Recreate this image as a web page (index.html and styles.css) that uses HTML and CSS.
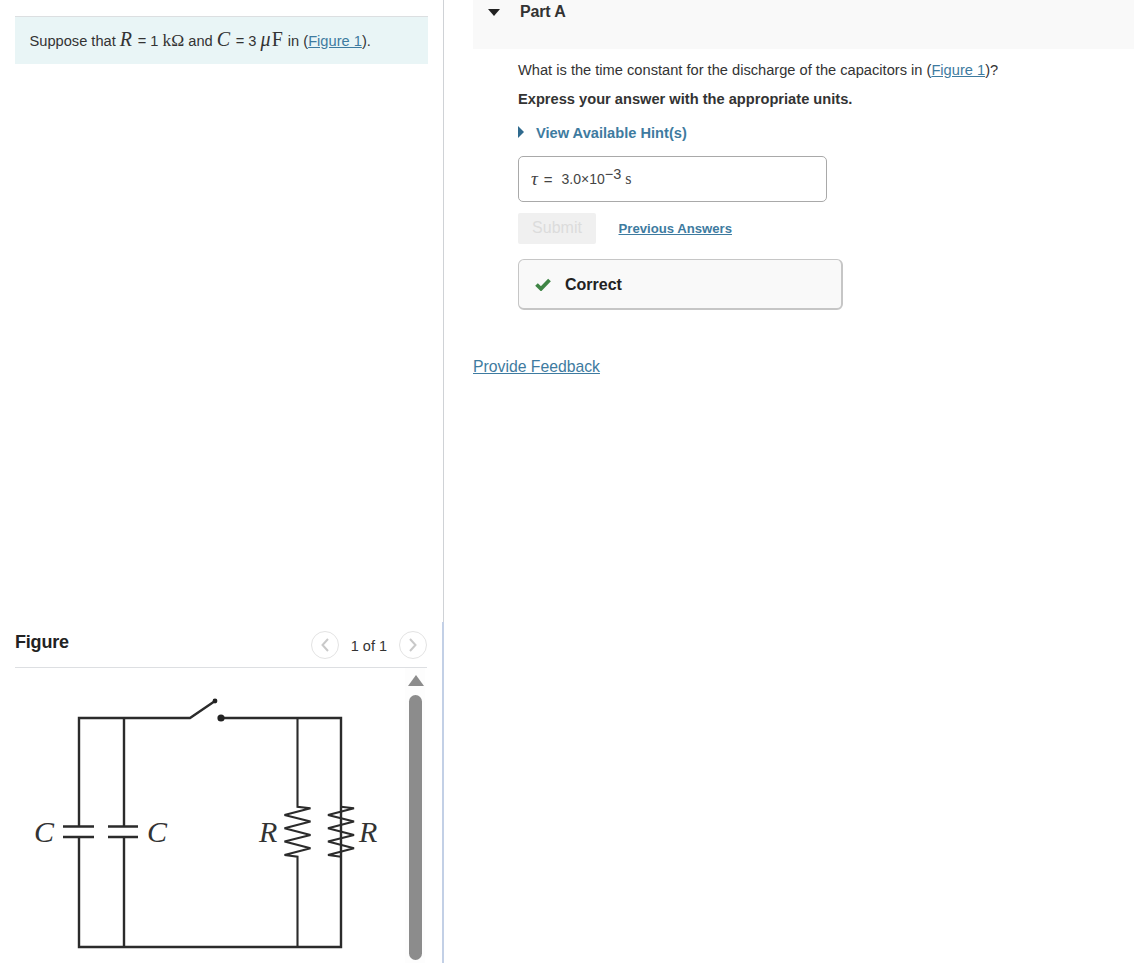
FILE: index.html
```html
<!DOCTYPE html>
<html lang="en">
<head>
<meta charset="utf-8">
<title>Part A</title>
<link rel="stylesheet" href="styles.css">
</head>
<body>
<div class="page">
  <aside class="left">
    <div class="intro">Suppose that <i class="m big wide">R</i> = 1 <span class="m roman">k&#937;</span> and <i class="m big wide">C</i> = 3 <span class="m micro"><i>&#956;</i>F</span> in (<a href="#">Figure 1</a>).</div>
    <section class="figure">
      <div class="fig-head">
        <h2>Figure</h2>
        <div class="pager">
          <span class="nav"><svg viewBox="0 0 10 14" width="10" height="14"><path d="M8 1 2.500 7 8 13" fill="none" stroke="#c9c9c9" stroke-width="2"/></svg></span>
          <span class="count">1 of 1</span>
          <span class="nav"><svg viewBox="0 0 10 14" width="10" height="14"><path d="M2 1 7.500 7 2 13" fill="none" stroke="#c9c9c9" stroke-width="2"/></svg></span>
        </div>
      </div>
      <div class="fig-body">
        <svg class="circuit" viewBox="0 0 390 295" width="390" height="295">
          <g fill="none" stroke="#2b2b2b" stroke-width="2.400">
            <path d="M64 158.500V50H175L200 33"/>
            <path d="M206 50H326V279H64V169"/>
            <path d="M109 50V158.500M109 169V279"/>
            <g stroke-width="2.100">
              <path d="M282.500 50V138.700L295.500 140.300 269.500 147 295.500 153.600 269.500 160.300 295.500 167 269.500 173.600 295.500 180.300 269.500 187 282.500 188.700V279"/>
              <path d="M326 138.700L339 140.300 313 147 339 153.600 313 160.300 339 167 313 173.600 339 180.300 313 187 326 188.700"/>
            </g>
            <path d="M48 158.500H79M48 169H79M93 158.500H123M93 169H123" stroke-width="2.600"/>
          </g>
          <circle cx="206" cy="50" r="3.600" fill="#222"/>
          <circle cx="200" cy="33" r="2.400" fill="#222"/>
          <g class="labels">
            <text x="19" y="174">C</text>
            <text x="132" y="174">C</text>
            <text x="244" y="174">R</text>
            <text x="344" y="174">R</text>
          </g>
        </svg>
        <div class="scroll">
          <span class="arrow"></span>
          <span class="thumb"></span>
        </div>
      </div>
    </section>
  </aside>
  <main class="right">
    <header class="part-head">
      <span class="caret"></span>
      <h1>Part A</h1>
    </header>
    <div class="part-body">
      <p class="q">What is the time constant for the discharge of the capacitors in (<a href="#">Figure 1</a>)?</p>
      <p class="ins">Express your answer with the appropriate units.</p>
      <div class="hint"><span class="hint-caret"></span><span>View Available Hint(s)</span></div>
      <div class="answer"><i class="serif tau">&#964;</i><span class="eq">=</span><span class="val">3.0&#215;10<sup>&#8722;3</sup></span><span class="serif unit">s</span></div>
      <div class="actions">
        <span class="submit">Submit</span>
        <a class="prev" href="#">Previous Answers</a>
      </div>
      <div class="correct">
        <svg viewBox="0 0 16 13" width="16" height="13"><path d="M1.500 6.500 6 10.800 14.500 2" fill="none" stroke="#3f8545" stroke-width="3.800"/></svg>
        <span>Correct</span>
      </div>
    </div>
    <a class="feedback" href="#">Provide Feedback</a>
  </main>
</div>
</body>
</html>
```
FILE: styles.css
```css
* { box-sizing: border-box; }
html, body { margin: 0; height: 963px; overflow: hidden; background: #fff; }
body { font-family: "Liberation Sans", Arial, sans-serif; font-size: 14.650px; color: #333; }
a { color: #3e7ba0; }
p, h1, h2 { margin: 0; }

.page { display: flex; height: 963px; }

.left {
  width: 444px;
  flex: none;
  padding: 16px 15px 0;
  border-right: 1px solid #cfd2d6;
  display: flex;
  flex-direction: column;
  justify-content: space-between;
}
.intro {
  width: 413px;
  height: 48px;
  padding-left: 14.500px;
  background: #e9f5f6;
  border-top: 1px solid #dcdfe1;
  white-space: pre;
  line-height: 44px;
}
.m { font-family: "Liberation Serif", serif; color: #333; }
.big { font-size: 20px; }
.wide { letter-spacing: 1.500px; }
.roman { font-size: 17.500px; }
.micro { font-size: 20px; letter-spacing: 1px; }

.figure { height: 332px; position: relative; }
.figure::after {
  content: "";
  position: absolute;
  right: -16px;
  top: -9px;
  bottom: 0;
  width: 2px;
  background: #c3d0e6;
}
.fig-head {
  width: 412px;
  height: 37px;
  display: flex;
  justify-content: space-between;
  align-items: flex-start;
  border-bottom: 1px solid #dddfe2;
}
h2 { font-size: 18px; line-height: 22px; font-weight: 700; color: #222; letter-spacing: -0.200px; }
.pager { display: flex; align-items: center; gap: 12px; }
.nav {
  width: 28px;
  height: 28px;
  border: 1px solid #e3e3e3;
  border-radius: 50%;
  display: flex;
  align-items: center;
  justify-content: center;
}
.count { font-size: 14.500px; color: #333; margin-top: 2px; }

.fig-body { position: relative; height: 295px; }
.circuit { display: block; }
.labels text { font-family: "Liberation Serif", serif; font-style: italic; font-size: 30px; fill: #333; stroke: none; }
.scroll {
  position: absolute;
  left: 390px;
  top: 0;
  bottom: 0;
  width: 20px;
  display: flex;
  flex-direction: column;
  align-items: center;
  background: #fdfdfd;
}
.arrow {
  margin: 7px 0 0 1px;
  width: 0;
  height: 0;
  border-left: 8px solid transparent;
  border-right: 8px solid transparent;
  border-bottom: 11px solid #8c8c8c;
}
.thumb {
  margin-top: 9px;
  width: 13px;
  height: 265px;
  border-radius: 7px;
  background: #8c8c8c;
}

.right { flex: 1; padding-left: 29px; min-width: 0; }
.part-head {
  height: 49px;
  background: #f9f9f9;
  display: flex;
  align-items: flex-start;
}
.caret {
  margin: 9px 0 0 15px;
  width: 0;
  height: 0;
  border-left: 6px solid transparent;
  border-right: 6px solid transparent;
  border-top: 7px solid #222;
}
h1 { margin: 1px 0 0 20px; font-size: 16px; line-height: 22px; font-weight: 700; color: #333; letter-spacing: -0.150px; }

.part-body { padding: 12px 0 0 45px; }
.q { line-height: 18px; }
.ins { margin-top: 11px; line-height: 18px; font-weight: 700; }
.hint { margin-top: 16px; display: flex; align-items: center; gap: 12px; line-height: 18px; font-weight: 700; color: #3e7ba0; }
.hint-caret {
  margin-top: -2px;
  width: 0;
  height: 0;
  border-top: 6px solid transparent;
  border-bottom: 6px solid transparent;
  border-left: 6px solid #2f6a8e;
}
.answer {
  margin-top: 14px;
  width: 309px;
  height: 46px;
  padding: 0 0 0 12px;
  border: 1px solid #a9a9a9;
  border-radius: 5px;
  display: flex;
  align-items: center;
  font-size: 14px;
  color: #444;
}
.serif { font-family: "Liberation Serif", serif; }
.tau { font-size: 19px; }
.eq { margin-left: 6px; font-size: 15px; }
.val { margin-left: 9px; }
.unit { margin-left: 4px; font-size: 16px; }
sup { font-size: 14.500px; line-height: 0; vertical-align: 5px; }
.actions { margin-top: 11px; display: flex; align-items: center; }
.submit {
  width: 78px;
  height: 31px;
  background: #f0f0f0;
  border-radius: 2px;
  color: #dcdcdc;
  font-size: 16px;
  line-height: 29px;
  text-align: center;
}
.prev { margin-left: 22.500px; font-size: 13.150px; font-weight: 700; color: #3e7ba0; }
.correct {
  margin-top: 15px;
  width: 325px;
  height: 51px;
  padding: 1px 0 0 16px;
  background: #f9f9f9;
  border: 1px solid #c6c6c6;
  border-bottom-width: 2px;
  border-right-width: 2px;
  border-radius: 6px;
  display: flex;
  align-items: center;
  gap: 14px;
  font-size: 16px;
  font-weight: 700;
  color: #222;
}
.feedback { display: inline-block; margin-top: 47px; font-size: 15.750px; line-height: 20px; }
```
